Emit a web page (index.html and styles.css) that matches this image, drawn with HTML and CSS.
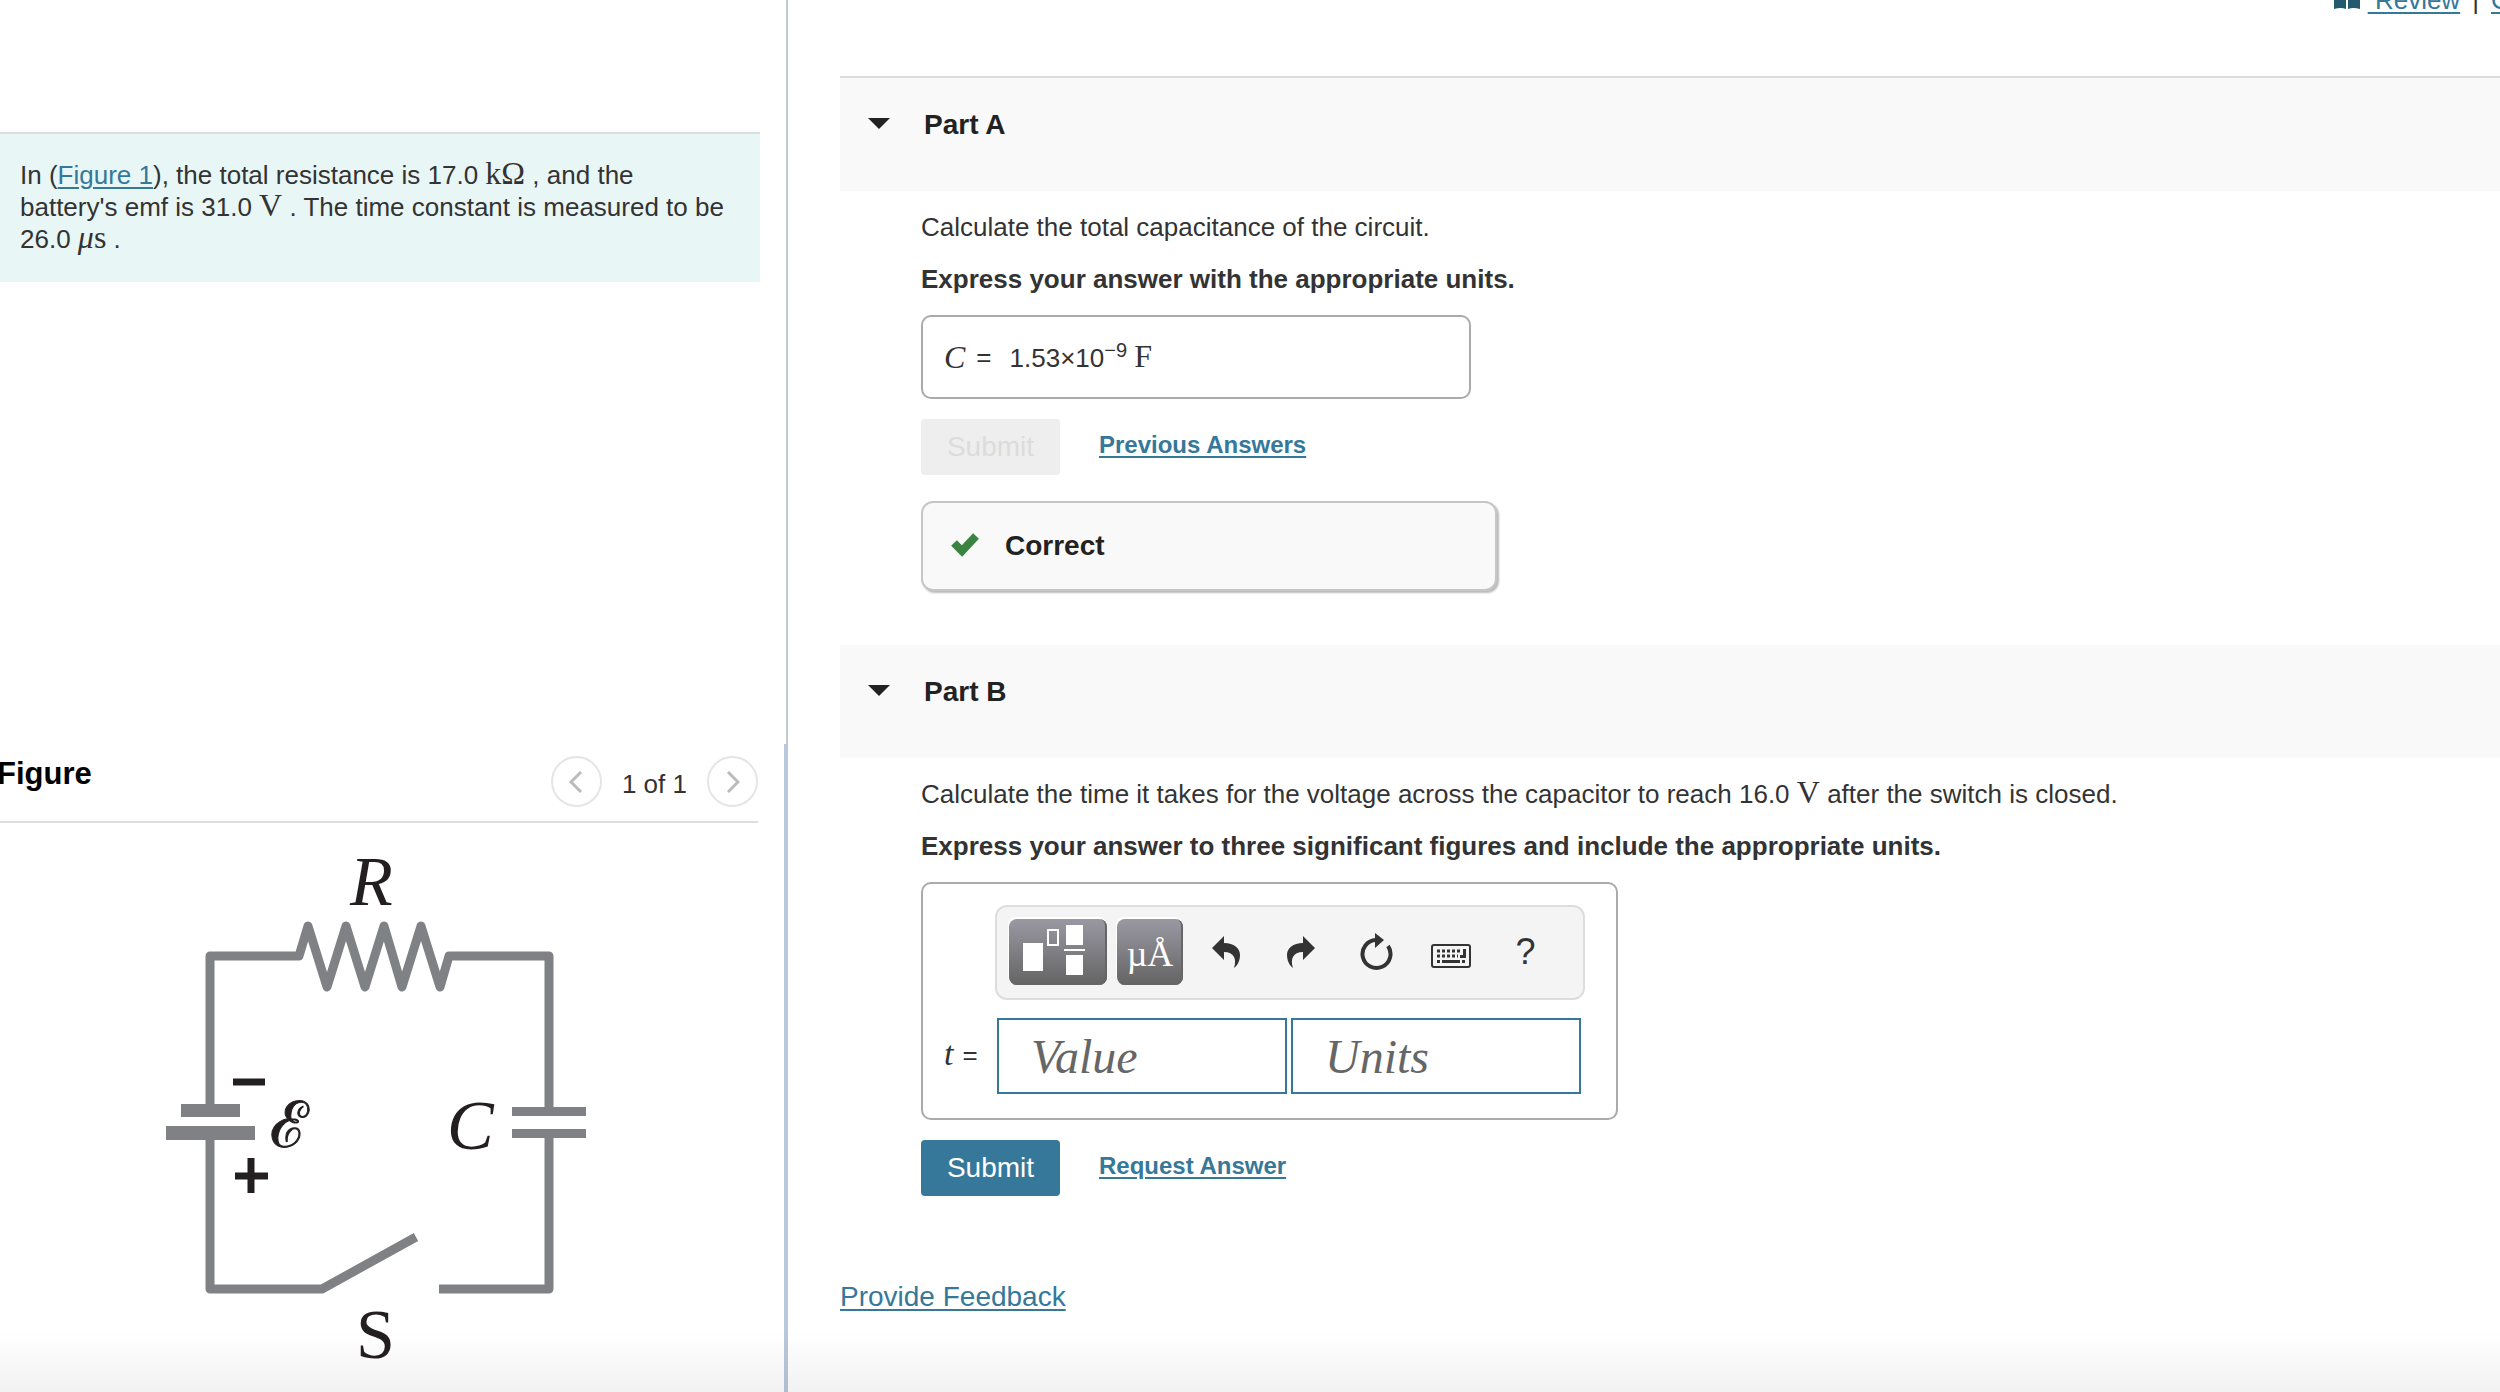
FILE: index.html
```html
<!DOCTYPE html>
<html lang="en">
<head>
    <meta charset="UTF-8">
    <meta name="viewport" content="width=device-width, initial-scale=1.0">
    <title>RC Circuit</title>
    <link rel="stylesheet" href="styles.css">
</head>
<body>
    <div class="page">
        <aside class="side">
            <section class="intro">
                <div class="problem">
                    In (<a href="#figure">Figure 1</a>), the total resistance is 17.0 <span class="unit">kΩ</span> , and the battery's emf is 31.0 <span class="unit">V</span> . The time constant is measured to be 26.0 <span class="unit"><i>μ</i>s</span> .
                </div>
            </section>
            <section class="figure" id="figure">
                <div class="figureHead">
                    <h2>Figure</h2>
                    <div class="pager">
                        <button class="round" aria-label="Previous figure">
                            <svg width="14" height="22" viewBox="0 0 14 22"><path d="M12 1 L2 11 L12 21"/></svg>
                        </button>
                        <span>1 of 1</span>
                        <button class="round" aria-label="Next figure">
                            <svg width="14" height="22" viewBox="0 0 14 22"><path d="M2 1 L12 11 L2 21"/></svg>
                        </button>
                    </div>
                </div>
                <svg class="circuit" width="440" height="540" viewBox="160 840 440 540">
                    <!-- wires -->
                    <g class="wire">
                        <path d="M210 1106 V956 H299 L308 926 L327 987 L346 926 L365 987 L384 926 L402 987 L421 926 L440 987 L449 956 H549 V1110"/>
                        <path d="M210 1136 V1289 H322 L416 1237"/>
                        <path d="M439 1289 H549 V1134"/>
                    </g>
                    <!-- battery and capacitor -->
                    <g class="plate">
                        <rect x="181" y="1104" width="59" height="13"/>
                        <rect x="166" y="1126" width="89" height="14"/>
                        <rect x="512" y="1107" width="74" height="9"/>
                        <rect x="512" y="1129" width="74" height="9"/>
                    </g>
                    <path class="sign" d="M233 1082 H265 M235 1176 H268 M251 1158 V1193"/>
                    <text class="it" x="350" y="905">R</text>
                    <text class="it" x="447" y="1149">C</text>
                    <text class="emf" x="270" y="1147">ℰ</text>
                    <text x="356" y="1358">S</text>
                </svg>
            </section>
        </aside>

        <main>
            <nav class="links">
                <svg width="26" height="26" viewBox="0 0 26 26"><path class="book" d="M0 2 Q7 0 12 2 V25 Q7 23 0 25 Z M14 2 Q19 0 26 2 V25 Q19 23 14 25 Z"/></svg>
                <a href="#review">&nbsp;Review</a><span>|</span><a href="#constants">Constants</a>
            </nav>

            <section class="part first">
                <h3><span class="caret"></span>Part A</h3>
                <div class="body">
                    <p>Calculate the total capacitance of the circuit.</p>
                    <p class="bold">Express your answer with the appropriate units.</p>
                    <div class="answer">
                        <span class="unit"><i>C</i></span><span class="eq">=</span><span>1.53×10<sup>−9</sup> <span class="unit">F</span></span>
                    </div>
                    <div class="actions">
                        <button class="submit" disabled>Submit</button>
                        <a href="#previous">Previous Answers</a>
                    </div>
                    <div class="correct">
                        <svg width="28" height="26" viewBox="0 0 28 26"><path d="M3 10 L11 18 L25 3"/></svg>
                        Correct
                    </div>
                </div>
            </section>

            <section class="part">
                <h3><span class="caret"></span>Part B</h3>
                <div class="body">
                    <p>Calculate the time it takes for the voltage across the capacitor to reach 16.0 <span class="unit">V</span> after the switch is closed.</p>
                    <p class="bold">Express your answer to three significant figures and include the appropriate units.</p>
                    <div class="editor">
                        <div class="toolbar">
                            <button class="dark wide" aria-label="Templates">
                                <svg width="62" height="50" viewBox="0 0 62 50">
                                    <rect x="0" y="18" width="20" height="28"/>
                                    <rect class="hollow" x="25" y="5" width="10" height="15"/>
                                    <rect x="43" y="0" width="17" height="20"/>
                                    <rect x="41" y="24" width="21" height="2"/>
                                    <rect x="43" y="30" width="17" height="20"/>
                                </svg>
                            </button>
                            <button class="dark">µÅ</button>
                            <div class="tools">
                                <button class="tool" aria-label="Undo">
                                    <svg width="28" height="32" viewBox="0 0 28 32"><path d="M0 12 L12 0 V7 C22 7 28 12 28 19 C28 24 26 29 22 32 C25 23 22 16 12 16 V24 Z"/></svg>
                                </button>
                                <button class="tool" aria-label="Redo">
                                    <svg width="28" height="32" viewBox="0 0 28 32"><path d="M28 12 L16 0 V7 C6 7 0 12 0 19 C0 24 2 29 6 32 C3 23 6 16 16 16 V24 Z"/></svg>
                                </button>
                                <button class="tool" aria-label="Reset">
                                    <svg width="34" height="38" viewBox="0 0 34 38"><path class="line" d="M17 7 A14 14 0 1 0 29 13"/><path d="M16 0 L25 7 L16 15 Z"/></svg>
                                </button>
                                <button class="tool low" aria-label="Keyboard shortcuts">
                                    <svg width="40" height="24" viewBox="0 0 40 24">
                                        <rect class="case" x="1" y="1" width="38" height="22" rx="2"/>
                                        <path class="keys" d="M6 7 H29 M6 12 H27"/>
                                        <path d="M32 5 H35 V14 H29 V11 H32 Z M6 16 H9 V19 H6 Z M11 16 H29 V19 H11 Z M31 16 H34 V19 H31 Z"/>
                                    </svg>
                                </button>
                                <button class="tool" aria-label="Help">?</button>
                            </div>
                        </div>
                        <label for="value"><i>t</i><span>=</span></label>
                        <div class="fields">
                            <input type="text" id="value" placeholder="Value">
                            <input type="text" id="units" placeholder="Units" aria-label="Units">
                        </div>
                    </div>
                    <div class="actions">
                        <button class="submit">Submit</button>
                        <a href="#request">Request Answer</a>
                    </div>
                </div>
            </section>

            <a class="feedback" href="#feedback">Provide Feedback</a>
        </main>
    </div>
</body>
</html>
```
FILE: styles.css
```css
* {
    box-sizing: border-box;
}
body {
    margin: 0;
    font: 26px/32px "Liberation Sans", Arial, sans-serif;
    color: #333;
    background-color: #fff;
}
a {
    color: #36789a;
    text-decoration-thickness: 2px;
    text-underline-offset: 3px;
}
h2, h3, p {
    margin: 0;
}
button {
    font: inherit;
    padding: 0;
    border: none;
    background: none;
}
.page {
    display: flex;
    min-height: 100vh;
    overflow: hidden;
}
/* soft shade along the bottom of the window */
.page::after {
    content: "";
    position: fixed;
    left: 0;
    right: 0;
    bottom: 0;
    height: 60px;
    background: linear-gradient(rgba(0, 0, 0, 0), rgba(0, 0, 0, .05));
    pointer-events: none;
}
.unit {
    font-family: "Liberation Serif", "Times New Roman", serif;
    font-size: 32px;
    line-height: 28px;
}

/* left side */
.side {
    flex: 0 0 788px;
    display: flex;
    flex-direction: column;
}
.intro {
    height: 744px;
    padding: 132px 26px 0 0;
    border-right: 2px solid #c1c9d5;
}
.problem {
    padding: 25px 28px 27px 20px;
    border-top: 2px solid #dcdedd;
    background-color: #e8f6f6;
}
.figure {
    flex: 1;
    padding: 12px 26px 0 0;
    border-right: 4px solid #b9c8dc;
}
.figureHead {
    display: flex;
    justify-content: space-between;
    height: 67px;
    border-bottom: 2px solid #ddd;
}
.figureHead h2 {
    margin: 2px 0 0 -3px;
    font-size: 31px;
    color: #000;
}
.pager {
    display: flex;
    align-items: flex-start;
    gap: 20px;
}
.pager span {
    padding-top: 12px;
}
.round {
    display: flex;
    align-items: center;
    justify-content: center;
    width: 51px;
    height: 51px;
    border: 2px solid #e5e5e5;
    border-radius: 50%;
}
.round path {
    fill: none;
    stroke: #bbb;
    stroke-width: 3;
}
.circuit {
    display: block;
    margin: 17px 0 0 160px;
    font: 70px "Liberation Serif", "Times New Roman", serif;
    fill: #231f20;
}
.circuit .it {
    font-style: italic;
}
.circuit .emf {
    font-family: "DejaVu Serif", serif;
    font-size: 64px;
    stroke: #231f20;
}
.wire {
    fill: none;
    stroke: #808184;
    stroke-width: 9;
    stroke-linejoin: round;
}
.plate {
    fill: #808184;
}
.sign {
    stroke: #231f20;
    stroke-width: 7;
}

/* right side */
main {
    flex: 1;
    padding-left: 52px;
}
.links {
    display: flex;
    justify-content: flex-end;
    height: 92px;
    margin: -16px -108px 0 0;
}
.links svg {
    margin-right: 8px;
}
.links span {
    padding: 0 12px;
}
.book {
    fill: #235a6e;
}
.part {
    padding-bottom: 52px;
}
.part h3 {
    display: flex;
    align-items: flex-start;
    height: 115px;
    padding: 31px 28px;
    border-top: 2px solid transparent;
    background: #f9f9f9 padding-box;
    font-size: 28px;
    color: #222;
}
.first h3 {
    border-top-color: #dcdedd;
}
.caret {
    margin: 9px 34px 0 0;
    border: 11px solid transparent;
    border-top-color: #222;
    border-bottom: none;
}
.body {
    display: flex;
    flex-direction: column;
    align-items: flex-start;
    gap: 20px;
    padding: 20px 0 0 81px;
}
.bold {
    font-weight: bold;
}
.answer {
    display: flex;
    align-items: center;
    width: 550px;
    height: 84px;
    padding: 0 21px;
    border: 2px solid #aaa;
    border-radius: 10px;
}
.answer .eq {
    padding: 0 18px 0 11px;
}
.answer sup {
    font-size: 20px;
    line-height: 20px;
}
.actions {
    display: flex;
    align-items: center;
    gap: 39px;
}
.actions a {
    padding-bottom: 4px;
    font-size: 24px;
    font-weight: bold;
}
.submit {
    width: 139px;
    height: 56px;
    border-radius: 4px;
    background-color: #36789a;
    color: #fff;
    font-size: 28px;
}
.submit:disabled {
    background-color: #eee;
    color: #dcdcdc;
}
.correct {
    display: flex;
    align-items: center;
    gap: 26px;
    width: 576px;
    height: 90px;
    margin-top: 6px;
    padding: 0 28px;
    border: 2px solid #c6c6c6;
    border-radius: 12px;
    background-color: #f9f9f9;
    box-shadow: 2px 2px 2px #bbb;
    font-size: 28px;
    font-weight: bold;
    color: #222;
}
.correct path {
    fill: none;
    stroke: #3a8340;
    stroke-width: 8;
}
.editor {
    display: grid;
    grid-template-columns: 53px auto;
    gap: 18px 0;
    padding: 21px 31px 24px 21px;
    border: 2px solid #aaa;
    border-radius: 10px;
}
.toolbar {
    grid-column: 2;
    display: flex;
    align-items: center;
    height: 95px;
    margin-left: -2px;
    padding: 0 12px 2px;
    border: 2px solid #ddd;
    border-radius: 12px;
    background-color: #f4f4f4;
}
.dark {
    width: 66px;
    height: 66px;
    margin-right: 10px;
    border-radius: 8px;
    background: linear-gradient(#9a99a3, #646464);
    box-shadow: -1px -2px 0 #fff, inset -2px -1px 0 #666;
    font: 36px/70px "Liberation Serif", "Times New Roman", serif;
    color: #fff;
}
.wide {
    width: 98px;
}
.dark svg {
    display: block;
    margin: 0 0 4px 14px;
    fill: #fff;
}
.dark .hollow {
    fill: none;
    stroke: #fff;
    stroke-width: 2;
}
.tools {
    display: flex;
    margin: 0 8px 0 -5px;
}
.tool {
    display: flex;
    align-items: center;
    justify-content: center;
    width: 75px;
    height: 66px;
    font-size: 36px;
    color: #333;
}
.tool svg {
    fill: #333;
}
.low {
    padding-top: 8px;
}
.tool .line, .tool .case {
    fill: none;
    stroke: #333;
    stroke-width: 4;
}
.tool .case {
    stroke-width: 2;
}
.keys {
    stroke: #333;
    stroke-width: 3;
    stroke-dasharray: 3 2;
}
.editor label {
    display: flex;
    gap: 9px;
    align-self: center;
    padding-bottom: 2px;
}
.editor i {
    font: italic 34px/30px "Liberation Serif", "Times New Roman", serif;
}
.fields {
    display: flex;
    gap: 4px;
}
.fields input {
    width: 290px;
    height: 76px;
    padding: 0 32px;
    border: 2px solid #36789a;
    font: italic 48px "Liberation Serif", "Times New Roman", serif;
    color: #333;
}
.fields input::placeholder {
    color: #666;
}
.feedback {
    display: inline-block;
    margin-top: 33px;
    font-size: 28px;
}
```
